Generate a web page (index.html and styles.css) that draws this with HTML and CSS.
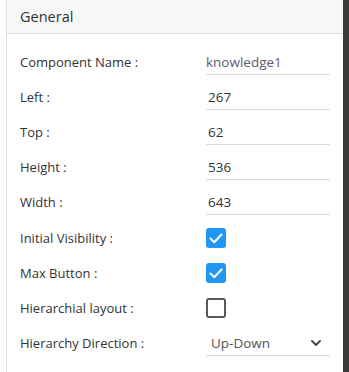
FILE: index.html
```html
<!DOCTYPE html>
<html>
<head>
<meta charset="utf-8">
<link rel="stylesheet" href="styles.css">
</head>
<body>
<div class="page">
  <div class="panel">
    <div class="panel-header">General</div>
    <div class="panel-body">
      <div class="row"><span class="label">Component Name :</span><div class="field field-name">knowledge1</div></div>
      <div class="row"><span class="label">Left :</span><div class="field">267</div></div>
      <div class="row"><span class="label">Top :</span><div class="field">62</div></div>
      <div class="row"><span class="label">Height :</span><div class="field">536</div></div>
      <div class="row"><span class="label">Width :</span><div class="field">643</div></div>
      <div class="row"><span class="label">Initial Visibility :</span><div class="check checked"><svg viewBox="0 0 20 20" width="20" height="20"><path d="M4.5 10.5 L8.3 14.2 L15.5 6.5" fill="none" stroke="#fff" stroke-width="2" stroke-linecap="round" stroke-linejoin="round"/></svg></div></div>
      <div class="row"><span class="label">Max Button :</span><div class="check checked"><svg viewBox="0 0 20 20" width="20" height="20"><path d="M4.5 10.5 L8.3 14.2 L15.5 6.5" fill="none" stroke="#fff" stroke-width="2" stroke-linecap="round" stroke-linejoin="round"/></svg></div></div>
      <div class="row"><span class="label">Hierarchial layout :</span><div class="check"></div></div>
      <div class="row"><span class="label">Hierarchy Direction :</span><div class="field select"><span class="select-value">Up-Down</span><svg class="chevron" viewBox="0 0 10 6" width="10" height="6"><path d="M1 1 L5 5 L9 1" fill="none" stroke="#444" stroke-width="1.8" stroke-linecap="round" stroke-linejoin="round"/></svg></div></div>
    </div>
  </div>
  <div class="scrollbar"></div>
</div>
</body>
</html>
```
FILE: styles.css
```css
html, body {
  margin: 0;
  padding: 0;
  background: #ffffff;
}
body {
  font-family: "Open Sans", "Noto Sans", sans-serif;
  color: #333333;
}
.page {
  display: flex;
  height: 372px;
  width: 349px;
  overflow: hidden;
}
.panel {
  margin-left: 6px;
  width: 336px;
  border-left: 1px solid #e1e5ea;
  display: flex;
  flex-direction: column;
}
.panel-header {
  height: 34px;
  box-sizing: border-box;
  background: #f7f7f7;
  border-bottom: 1px solid #dedede;
  padding-left: 13px;
  display: flex;
  align-items: center;
  font-size: 14.5px;
  color: #333;
}
.panel-body {
  padding: 10px 0 0 13px;
}
.row {
  height: 35.2px;
  display: grid;
  grid-template-columns: 186px 124px;
  align-items: center;
}
.label {
  font-size: 13px;
  color: #333;
  white-space: nowrap;
}
.field {
  height: 26px;
  box-sizing: border-box;
  border-bottom: 1px solid #dcdcdc;
  display: flex;
  align-items: center;
  font-size: 13.5px;
  color: #333;
  padding-left: 2px;
  padding-top: 1px;
}
.field-name {
  color: #5f5a6e;
  padding-left: 0;
}
.select {
  justify-content: space-between;
  padding-left: 5px;
  padding-right: 9px;
}
.select-value {
  color: #555;
}
.chevron {
  display: block;
}
.check {
  width: 20px;
  height: 20px;
  box-sizing: border-box;
  border: 2px solid #5a5a5a;
  border-radius: 3px;
  background: #fff;
}
.check.checked {
  border: none;
  background: #2196f3;
}
.check svg {
  display: block;
}
.scrollbar {
  width: 6px;
  height: 372px;
  background: #3b3b3b;
}
```
